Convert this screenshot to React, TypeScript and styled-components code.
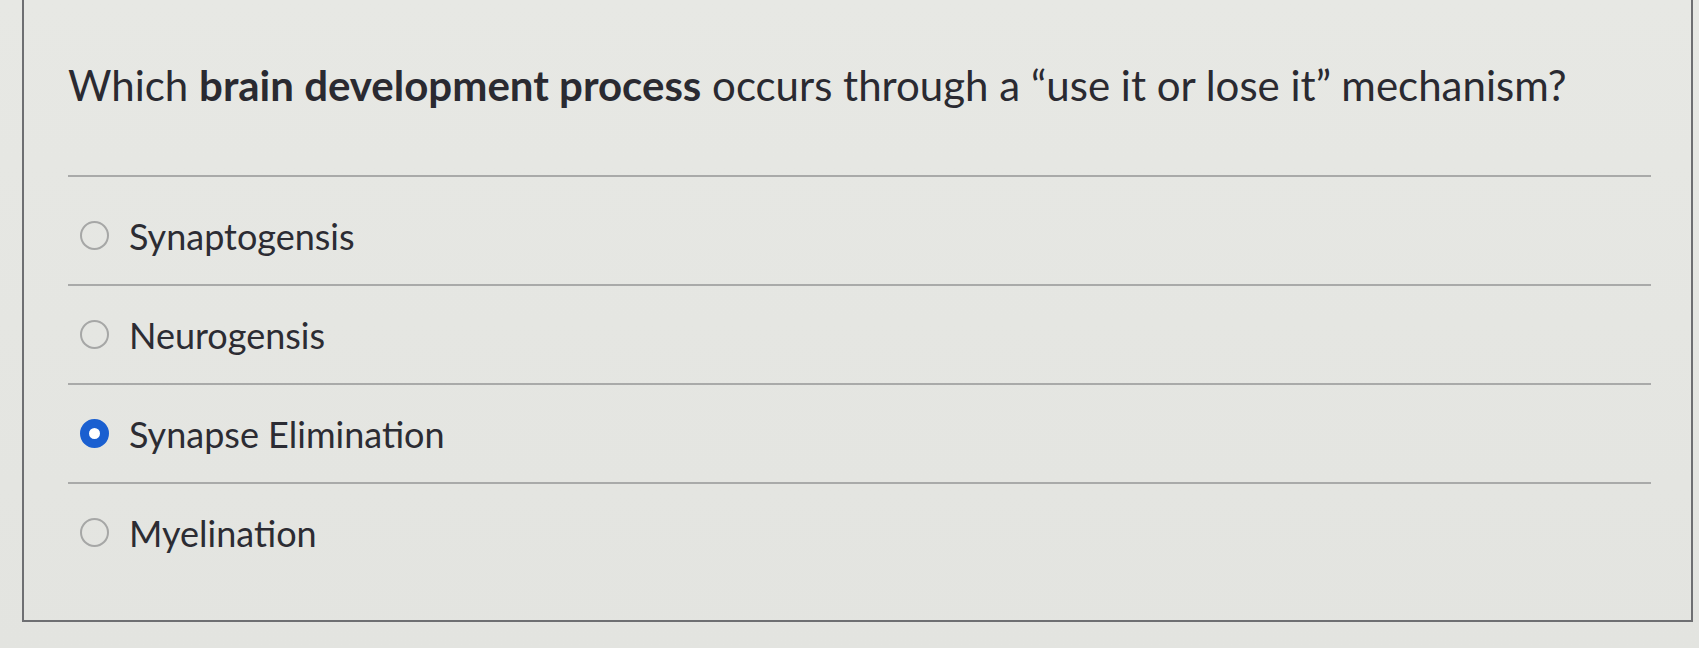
import React, { useState } from 'react';
import styled, { createGlobalStyle } from 'styled-components';

const GlobalStyle = createGlobalStyle`
  html, body {
    margin: 0;
    padding: 0;
    background: #e4e5e1;
  }
  body {
    font-family: Lato, "Open Sans", "Liberation Sans", sans-serif;
    color: #2c2c33;
  }
`;

const Page = styled.div`
  width: 1699px;
  height: 648px;
  overflow: hidden;
  background: linear-gradient(180deg, #e7e8e4 0%, #e3e4e0 100%);
`;

const QuestionCard = styled.div`
  margin: 0 6px 0 22px;
  height: 622px;
  box-sizing: border-box;
  border: 2px solid #6e6f72;
  border-top: none;
  padding: 0 40px 0 44px;
`;

const QuestionText = styled.h2`
  margin: 0;
  padding-top: 60px;
  font-size: 42px;
  line-height: 50px;
  font-weight: 400;
  color: #2a2a31;
  b {
    font-weight: 700;
  }
`;

const Divider = styled.hr`
  margin: 65px 0 0;
  border: none;
  border-top: 2px solid #a9aaa9;
`;

const OptionList = styled.div`
  padding-top: 10px;
  display: flex;
  flex-direction: column;
`;

const OptionRow = styled.label<{ last?: boolean }>`
  height: 97px;
  display: flex;
  align-items: center;
  gap: 20px;
  padding-left: 12px;
  border-bottom: ${({ last }) => (last ? 'none' : '2px solid #a9aaa9')};
  font-size: 36px;
  color: #2c2c33;
  cursor: pointer;
`;

const Radio = styled.span<{ checked?: boolean }>`
  width: 29px;
  height: 29px;
  box-sizing: border-box;
  border-radius: 50%;
  flex-shrink: 0;
  background: ${({ checked }) => (checked ? '#ffffff' : 'transparent')};
  border: ${({ checked }) => (checked ? '9px solid #1a5fd0' : '2px solid #a6a7a6')};
`;

const options = ['Synaptogensis', 'Neurogensis', 'Synapse Elimination', 'Myelination'];

export default function App() {
  const [selected, setSelected] = useState('Synapse Elimination');

  return (
    <Page>
      <GlobalStyle />
      <QuestionCard>
        <QuestionText>
          Which <b>brain development process</b> occurs through a “use it or lose it” mechanism?
        </QuestionText>
        <Divider />
        <OptionList>
          {options.map((opt, i) => (
            <OptionRow key={opt} last={i === options.length - 1} onClick={() => setSelected(opt)}>
              <Radio checked={selected === opt} />
              <span>{opt}</span>
            </OptionRow>
          ))}
        </OptionList>
      </QuestionCard>
    </Page>
  );
}
